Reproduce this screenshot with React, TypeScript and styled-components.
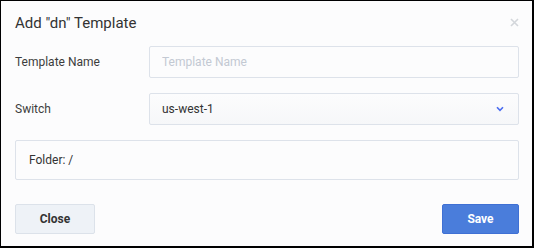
import styled, { createGlobalStyle } from 'styled-components';

const GlobalStyle = createGlobalStyle`
  html, body {
    margin: 0;
    padding: 0;
    background: #ffffff;
  }
  * {
    box-sizing: border-box;
  }
`;

const Modal = styled.div`
  width: 534px;
  height: 248px;
  background: #fcfcfd;
  border-style: solid;
  border-color: #000;
  border-width: 1px 2px 2px 1px;
  font-family: Roboto, 'Liberation Sans', sans-serif;
  color: #333;
  display: flex;
  flex-direction: column;
`;

const Header = styled.div`
  display: flex;
  align-items: center;
  justify-content: space-between;
  padding: 11px 13px 0 14px;
  height: 32px;
`;

const Title = styled.h4`
  margin: 0;
  font-size: 15px;
  font-weight: 400;
  line-height: 20px;
  color: #333;
`;

const CloseX = styled.button`
  border: none;
  background: none;
  padding: 0;
  width: 10px;
  height: 10px;
  display: flex;
  align-items: center;
  justify-content: center;
  cursor: pointer;
  svg {
    display: block;
  }
`;

const Body = styled.div`
  padding: 13px 13px 0 14px;
  display: flex;
  flex-direction: column;
  gap: 15px;
`;

const Row = styled.div`
  display: grid;
  grid-template-columns: 134px 1fr;
  align-items: center;
`;

const Label = styled.label`
  font-size: 12px;
  color: #3c3c3c;
`;

const fieldBorder = '#dde2ea';

const Input = styled.input`
  height: 32px;
  width: 100%;
  border: 1px solid ${fieldBorder};
  border-radius: 2px;
  background: #fcfcfd;
  padding: 0 12px;
  font-family: inherit;
  font-size: 12px;
  color: #333;
  outline: none;
  &::placeholder {
    color: #c3c9d3;
  }
`;

const Select = styled.div`
  height: 32px;
  border: 1px solid ${fieldBorder};
  border-radius: 2px;
  background: linear-gradient(#fcfcfd, #f6f7f9);
  padding: 0 14px 0 12px;
  display: flex;
  align-items: center;
  justify-content: space-between;
  font-size: 12px;
  color: #333;
`;

const FolderBox = styled.div`
  height: 40px;
  border: 1px solid ${fieldBorder};
  border-radius: 2px;
  padding: 0 13px;
  display: flex;
  align-items: center;
  font-size: 12px;
  color: #333;
`;

const Footer = styled.div`
  margin-top: auto;
  padding: 0 13px 12px 14px;
  display: flex;
  justify-content: space-between;
`;

const Button = styled.button<{ primary?: boolean }>`
  height: 30px;
  width: ${({ primary }) => (primary ? '77px' : '80px')};
  border-radius: 2px;
  font-family: inherit;
  font-size: 12px;
  font-weight: 700;
  cursor: pointer;
  border: 1px solid ${({ primary }) => (primary ? '#3f70d4' : '#dce2ea')};
  background: ${({ primary }) => (primary ? '#4a7ddb' : '#eef2f7')};
  color: ${({ primary }) => (primary ? '#fff' : '#333')};
`;

export default function App() {
  return (
    <>
      <GlobalStyle />
      <Modal>
        <Header>
          <Title>Add "dn" Template</Title>
          <CloseX aria-label='close'>
            <svg width='9' height='9' viewBox='0 0 9 9'>
              <path d='M1 1 L8 8 M8 1 L1 8' stroke='#d3d6db' strokeWidth='1.6' />
            </svg>
          </CloseX>
        </Header>
        <Body>
          <Row>
            <Label>Template Name</Label>
            <Input placeholder='Template Name' />
          </Row>
          <Row>
            <Label>Switch</Label>
            <Select>
              <span>us-west-1</span>
              <svg width='8' height='6' viewBox='0 0 8 6'>
                <path d='M1 1.2 L4 4.4 L7 1.2' fill='none' stroke='#4a6cf0' strokeWidth='1.6' />
              </svg>
            </Select>
          </Row>
          <FolderBox>Folder: /</FolderBox>
        </Body>
        <Footer>
          <Button>Close</Button>
          <Button primary>Save</Button>
        </Footer>
      </Modal>
    </>
  );
}
